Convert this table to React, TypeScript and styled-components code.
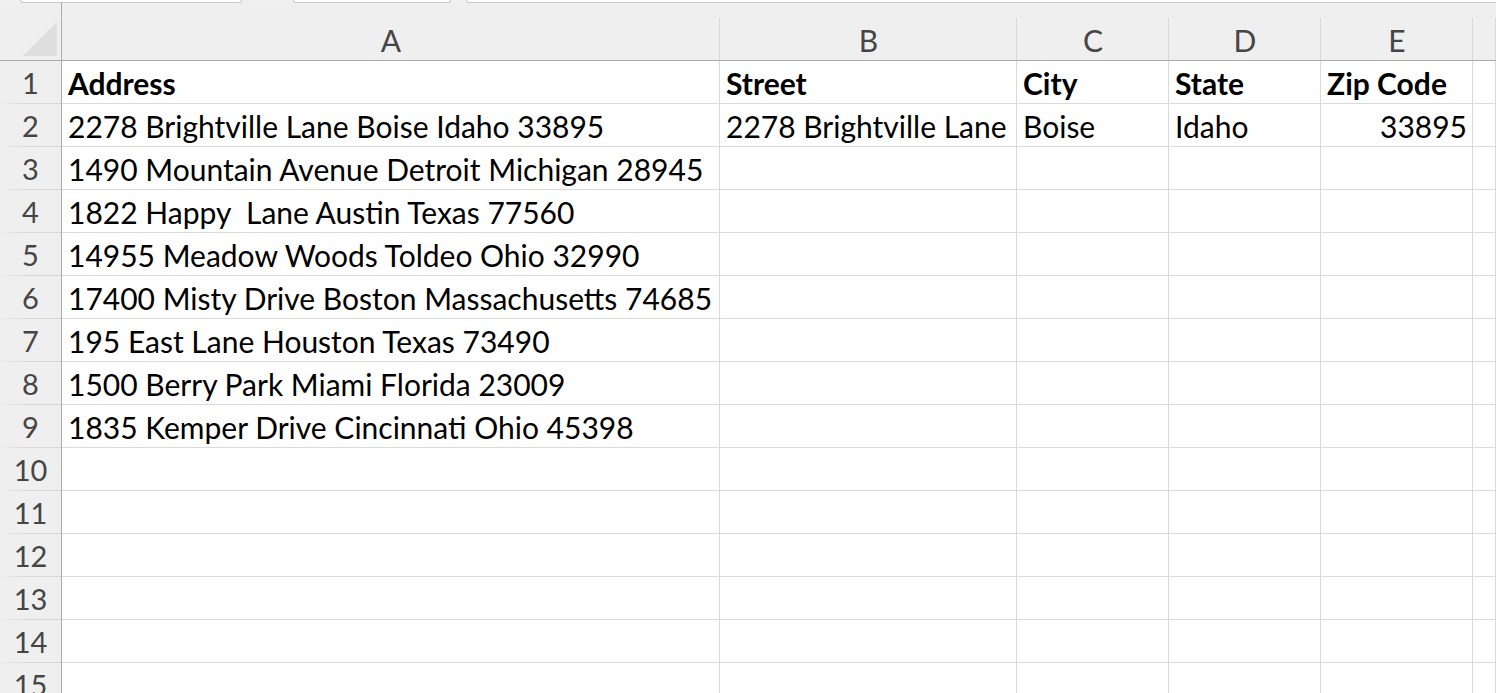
import React from "react";
import styled, { createGlobalStyle } from "styled-components";

const Global = createGlobalStyle`
  html, body { margin: 0; padding: 0; background: #ffffff; overflow: hidden; }
  * { box-sizing: border-box; }
`;

const COLS = "62px 658px 297px 152px 152px 152px 1fr";
const FONT = `Lato, "Open Sans", "Noto Sans", sans-serif`;

const Page = styled.div`
  width: 1496px;
  height: 693px;
  display: flex;
  flex-direction: column;
  background: #f0f0f0;
  overflow: hidden;
`;

const TabStrip = styled.div`
  height: 3px;
  display: flex;
  align-items: flex-start;
  padding-left: 20px;
  gap: 51px;
  background: #f0f0f0;
`;

const Tab = styled.div<{ $w?: number; $gap?: number }>`
  height: 3px;
  ${(p) => (p.$w ? `width: ${p.$w}px; flex: none;` : "flex: 1; margin-right: -10px;")}
  ${(p) => (p.$gap !== undefined ? `margin-left: ${p.$gap - 51}px;` : "")}
  background: #ffffff;
  border: 1px solid #c9c9c9;
  border-top: none;
  border-radius: 0 0 6px 6px;
`;

const Grid = styled.div`
  display: grid;
  grid-template-columns: ${COLS};
  grid-auto-rows: 43px;
  grid-template-rows: 58px;
  background: #ffffff;
  font-family: ${FONT};
`;

const Corner = styled.div`
  background: #efefef;
  border-bottom: 1px solid #ababab;
  border-right: 1px solid #ababab;
  position: relative;
  display: flex;
  align-items: flex-end;
  justify-content: flex-end;
  padding: 0 3px 3px 0;
  &::after {
    content: "";
    position: absolute;
    right: -1px;
    top: 15px;
    width: 1px;
    height: 1px;
    background: #c8c8c8;
  }
`;

const ColHead = styled.div`
  background: #efefef;
  border-bottom: 1px solid #ababab;
  position: relative;
  display: flex;
  align-items: flex-end;
  justify-content: center;
  padding-bottom: 3px;
  font-size: 30px;
  line-height: 34px;
  color: #454545;
  &::after {
    content: "";
    position: absolute;
    right: 0;
    top: 15px;
    bottom: 0;
    width: 1px;
    background: #d9d9d9;
  }
`;

const RowHead = styled.div`
  background:
    linear-gradient(to right, #efefef 0px, #d9d9d9 22px) left bottom / 100% 1px no-repeat,
    #efefef;
  border-right: 1px solid #ababab;
  text-align: center;
  padding-top: 1px;
  font-size: 29px;
  line-height: 42px;
  color: #454545;
  overflow: hidden;
`;

const Cell = styled.div<{ $bold?: boolean; $right?: boolean }>`
  border-right: 1px solid #dadada;
  border-bottom: 1px solid #dadada;
  padding: 2px 5px 0 6px;
  font-size: 30px;
  line-height: 41px;
  color: #000000;
  white-space: pre;
  overflow: visible;
  font-weight: ${(p) => (p.$bold ? 700 : 400)};
  text-align: ${(p) => (p.$right ? "right" : "left")};
`;

const CornerMark = () => (
  <svg width="36" height="36" viewBox="0 0 36 36">
    <polygon points="1,35 35,35 35,1" fill="#dfdfdf" />
  </svg>
);

type CellData = { t: string; bold?: boolean; right?: boolean };

const rows: CellData[][] = [
  [
    { t: "Address", bold: true },
    { t: "Street", bold: true },
    { t: "City", bold: true },
    { t: "State", bold: true },
    { t: "Zip Code", bold: true },
  ],
  [
    { t: "2278 Brightville Lane Boise Idaho 33895" },
    { t: "2278 Brightville Lane" },
    { t: "Boise" },
    { t: "Idaho" },
    { t: "33895", right: true },
  ],
  [{ t: "1490 Mountain Avenue Detroit Michigan 28945" }],
  [{ t: "1822 Happy  Lane Austin Texas 77560" }],
  [{ t: "14955 Meadow Woods Toldeo Ohio 32990" }],
  [{ t: "17400 Misty Drive Boston Massachusetts 74685" }],
  [{ t: "195 East Lane Houston Texas 73490" }],
  [{ t: "1500 Berry Park Miami Florida 23009" }],
  [{ t: "1835 Kemper Drive Cincinnati Ohio 45398" }],
  [],
  [],
  [],
  [],
  [],
  [],
];

const letters = ["A", "B", "C", "D", "E", ""];

export default function App() {
  return (
    <>
      <Global />
      <Page>
        <TabStrip>
          <Tab $w={222} />
          <Tab $w={158} />
          <Tab $gap={15} />
        </TabStrip>
        <Grid>
          <Corner>
            <CornerMark />
          </Corner>
          {letters.map((l, i) => (
            <ColHead key={i}>{l}</ColHead>
          ))}
          {rows.map((r, ri) => (
            <React.Fragment key={ri}>
              <RowHead>{ri + 1}</RowHead>
              {[0, 1, 2, 3, 4, 5].map((ci) => {
                const c = r[ci];
                return (
                  <Cell key={ci} $bold={c?.bold} $right={c?.right}>
                    {c?.t ?? ""}
                  </Cell>
                );
              })}
            </React.Fragment>
          ))}
        </Grid>
      </Page>
    </>
  );
}
